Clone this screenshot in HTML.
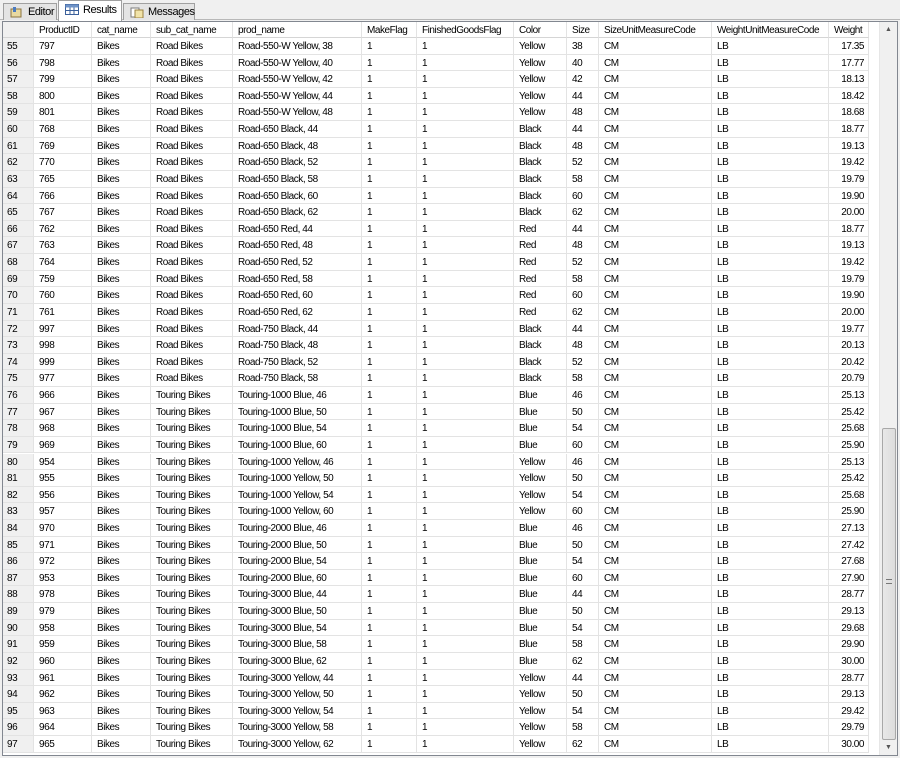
<!DOCTYPE html>
<html><head><meta charset="utf-8"><style>
*{margin:0;padding:0;box-sizing:border-box}
body{width:900px;height:758px;background:#f0f0f0;font-family:"Liberation Sans",sans-serif;font-size:10px;letter-spacing:-0.45px;color:#000;position:relative;overflow:hidden}
.tabs{position:absolute;left:0;top:0;width:900px;height:20px;background:#f0f0f0;border-bottom:1px solid #b8b8b8}
.tab{position:absolute;top:3px;height:17px;border:1px solid #a0a0a0;border-bottom:none;background:#e4e4e4;font-size:11px;padding:2px 0 0 24px;white-space:nowrap}
.tab.act{top:0;height:21px;background:#fff;padding-top:3px}
.ic{position:absolute;left:6px;top:3px;width:14px;height:11px}
.grid{position:absolute;left:2px;top:21px;width:896px;height:735px;background:#fff;border:1px solid #828790}
.row{position:absolute;left:0;height:16.62px;width:866px;display:flex}
.c{border-right:1px solid #e3e3e3;border-bottom:1px solid #e3e3e3;padding:3px 0 0 5px;white-space:nowrap;overflow:hidden;line-height:12px}
.n{background:#f0f0f0;width:31px;padding-left:4px}
.hd .c{background:#fff;border-bottom:1px solid #d5d5d5}
.hd .n{background:#f0f0f0}
.w1{width:58px}.w2{width:59px}.w3{width:82px}.w4{width:129px}.w5{width:55px}.w6{width:97px}.w7{width:53px}.w8{width:32px}.w9{width:113px}.w10{width:117px}.w11{width:40px;text-align:right;padding-right:4px}
.hd .w11{text-align:left;padding-left:5px}
.sb{position:absolute;right:0;top:0;width:18px;height:733px;background:#f0f0f0;border-left:1px solid #e6e6e6}
.thumb{position:absolute;left:2px;top:406px;width:14px;height:312px;background:linear-gradient(90deg,#e8e8e8,#dcdcdc);border:1px solid #a8a8a8;border-radius:2px}
.ar{position:absolute;left:5px;font-size:7px;color:#555}
</style></head><body>
<div class="tabs">
<div class="tab" style="left:3px;width:54px"><svg class="ic" viewBox="0 0 14 11"><rect x="1" y="2" width="10" height="8" fill="#e8d9a0" stroke="#8a7440"/><rect x="3" y="0" width="3" height="5" fill="#4a7ac0"/></svg>Editor</div>
<div class="tab act" style="left:58px;width:64px"><svg class="ic" viewBox="0 0 14 11"><rect x="0.5" y="0.5" width="13" height="10" fill="#fff" stroke="#3a5f9a"/><rect x="0.5" y="0.5" width="13" height="3" fill="#6e93c8"/><path d="M0.5 6.5H13.5M5 3.5V10.5M9 3.5V10.5" stroke="#3a5f9a"/></svg>Results</div>
<div class="tab" style="left:123px;width:72px"><svg class="ic" viewBox="0 0 14 11"><rect x="1" y="1" width="8" height="9" fill="#fff" stroke="#7a7a7a"/><rect x="5" y="3" width="8" height="8" fill="#f1e3a8" stroke="#9a8240"/></svg>Messages</div>
</div>
<div class="grid">
<div class="row hd" style="top:0;height:16px"><div class="c n"></div><div class="c w1">ProductID</div><div class="c w2">cat_name</div><div class="c w3">sub_cat_name</div><div class="c w4">prod_name</div><div class="c w5">MakeFlag</div><div class="c w6">FinishedGoodsFlag</div><div class="c w7">Color</div><div class="c w8">Size</div><div class="c w9">SizeUnitMeasureCode</div><div class="c w10">WeightUnitMeasureCode</div><div class="c w11">Weight</div></div>
<div class="row" style="top:16px"><div class="c n">55</div><div class="c w1">797</div><div class="c w2">Bikes</div><div class="c w3">Road Bikes</div><div class="c w4">Road-550-W Yellow, 38</div><div class="c w5">1</div><div class="c w6">1</div><div class="c w7">Yellow</div><div class="c w8">38</div><div class="c w9">CM</div><div class="c w10">LB</div><div class="c w11">17.35</div></div>
<div class="row" style="top:32.62px"><div class="c n">56</div><div class="c w1">798</div><div class="c w2">Bikes</div><div class="c w3">Road Bikes</div><div class="c w4">Road-550-W Yellow, 40</div><div class="c w5">1</div><div class="c w6">1</div><div class="c w7">Yellow</div><div class="c w8">40</div><div class="c w9">CM</div><div class="c w10">LB</div><div class="c w11">17.77</div></div>
<div class="row" style="top:49.24px"><div class="c n">57</div><div class="c w1">799</div><div class="c w2">Bikes</div><div class="c w3">Road Bikes</div><div class="c w4">Road-550-W Yellow, 42</div><div class="c w5">1</div><div class="c w6">1</div><div class="c w7">Yellow</div><div class="c w8">42</div><div class="c w9">CM</div><div class="c w10">LB</div><div class="c w11">18.13</div></div>
<div class="row" style="top:65.86px"><div class="c n">58</div><div class="c w1">800</div><div class="c w2">Bikes</div><div class="c w3">Road Bikes</div><div class="c w4">Road-550-W Yellow, 44</div><div class="c w5">1</div><div class="c w6">1</div><div class="c w7">Yellow</div><div class="c w8">44</div><div class="c w9">CM</div><div class="c w10">LB</div><div class="c w11">18.42</div></div>
<div class="row" style="top:82.48px"><div class="c n">59</div><div class="c w1">801</div><div class="c w2">Bikes</div><div class="c w3">Road Bikes</div><div class="c w4">Road-550-W Yellow, 48</div><div class="c w5">1</div><div class="c w6">1</div><div class="c w7">Yellow</div><div class="c w8">48</div><div class="c w9">CM</div><div class="c w10">LB</div><div class="c w11">18.68</div></div>
<div class="row" style="top:99.1px"><div class="c n">60</div><div class="c w1">768</div><div class="c w2">Bikes</div><div class="c w3">Road Bikes</div><div class="c w4">Road-650 Black, 44</div><div class="c w5">1</div><div class="c w6">1</div><div class="c w7">Black</div><div class="c w8">44</div><div class="c w9">CM</div><div class="c w10">LB</div><div class="c w11">18.77</div></div>
<div class="row" style="top:115.72px"><div class="c n">61</div><div class="c w1">769</div><div class="c w2">Bikes</div><div class="c w3">Road Bikes</div><div class="c w4">Road-650 Black, 48</div><div class="c w5">1</div><div class="c w6">1</div><div class="c w7">Black</div><div class="c w8">48</div><div class="c w9">CM</div><div class="c w10">LB</div><div class="c w11">19.13</div></div>
<div class="row" style="top:132.34px"><div class="c n">62</div><div class="c w1">770</div><div class="c w2">Bikes</div><div class="c w3">Road Bikes</div><div class="c w4">Road-650 Black, 52</div><div class="c w5">1</div><div class="c w6">1</div><div class="c w7">Black</div><div class="c w8">52</div><div class="c w9">CM</div><div class="c w10">LB</div><div class="c w11">19.42</div></div>
<div class="row" style="top:148.96px"><div class="c n">63</div><div class="c w1">765</div><div class="c w2">Bikes</div><div class="c w3">Road Bikes</div><div class="c w4">Road-650 Black, 58</div><div class="c w5">1</div><div class="c w6">1</div><div class="c w7">Black</div><div class="c w8">58</div><div class="c w9">CM</div><div class="c w10">LB</div><div class="c w11">19.79</div></div>
<div class="row" style="top:165.58px"><div class="c n">64</div><div class="c w1">766</div><div class="c w2">Bikes</div><div class="c w3">Road Bikes</div><div class="c w4">Road-650 Black, 60</div><div class="c w5">1</div><div class="c w6">1</div><div class="c w7">Black</div><div class="c w8">60</div><div class="c w9">CM</div><div class="c w10">LB</div><div class="c w11">19.90</div></div>
<div class="row" style="top:182.2px"><div class="c n">65</div><div class="c w1">767</div><div class="c w2">Bikes</div><div class="c w3">Road Bikes</div><div class="c w4">Road-650 Black, 62</div><div class="c w5">1</div><div class="c w6">1</div><div class="c w7">Black</div><div class="c w8">62</div><div class="c w9">CM</div><div class="c w10">LB</div><div class="c w11">20.00</div></div>
<div class="row" style="top:198.82px"><div class="c n">66</div><div class="c w1">762</div><div class="c w2">Bikes</div><div class="c w3">Road Bikes</div><div class="c w4">Road-650 Red, 44</div><div class="c w5">1</div><div class="c w6">1</div><div class="c w7">Red</div><div class="c w8">44</div><div class="c w9">CM</div><div class="c w10">LB</div><div class="c w11">18.77</div></div>
<div class="row" style="top:215.44px"><div class="c n">67</div><div class="c w1">763</div><div class="c w2">Bikes</div><div class="c w3">Road Bikes</div><div class="c w4">Road-650 Red, 48</div><div class="c w5">1</div><div class="c w6">1</div><div class="c w7">Red</div><div class="c w8">48</div><div class="c w9">CM</div><div class="c w10">LB</div><div class="c w11">19.13</div></div>
<div class="row" style="top:232.06px"><div class="c n">68</div><div class="c w1">764</div><div class="c w2">Bikes</div><div class="c w3">Road Bikes</div><div class="c w4">Road-650 Red, 52</div><div class="c w5">1</div><div class="c w6">1</div><div class="c w7">Red</div><div class="c w8">52</div><div class="c w9">CM</div><div class="c w10">LB</div><div class="c w11">19.42</div></div>
<div class="row" style="top:248.68px"><div class="c n">69</div><div class="c w1">759</div><div class="c w2">Bikes</div><div class="c w3">Road Bikes</div><div class="c w4">Road-650 Red, 58</div><div class="c w5">1</div><div class="c w6">1</div><div class="c w7">Red</div><div class="c w8">58</div><div class="c w9">CM</div><div class="c w10">LB</div><div class="c w11">19.79</div></div>
<div class="row" style="top:265.3px"><div class="c n">70</div><div class="c w1">760</div><div class="c w2">Bikes</div><div class="c w3">Road Bikes</div><div class="c w4">Road-650 Red, 60</div><div class="c w5">1</div><div class="c w6">1</div><div class="c w7">Red</div><div class="c w8">60</div><div class="c w9">CM</div><div class="c w10">LB</div><div class="c w11">19.90</div></div>
<div class="row" style="top:281.92px"><div class="c n">71</div><div class="c w1">761</div><div class="c w2">Bikes</div><div class="c w3">Road Bikes</div><div class="c w4">Road-650 Red, 62</div><div class="c w5">1</div><div class="c w6">1</div><div class="c w7">Red</div><div class="c w8">62</div><div class="c w9">CM</div><div class="c w10">LB</div><div class="c w11">20.00</div></div>
<div class="row" style="top:298.54px"><div class="c n">72</div><div class="c w1">997</div><div class="c w2">Bikes</div><div class="c w3">Road Bikes</div><div class="c w4">Road-750 Black, 44</div><div class="c w5">1</div><div class="c w6">1</div><div class="c w7">Black</div><div class="c w8">44</div><div class="c w9">CM</div><div class="c w10">LB</div><div class="c w11">19.77</div></div>
<div class="row" style="top:315.16px"><div class="c n">73</div><div class="c w1">998</div><div class="c w2">Bikes</div><div class="c w3">Road Bikes</div><div class="c w4">Road-750 Black, 48</div><div class="c w5">1</div><div class="c w6">1</div><div class="c w7">Black</div><div class="c w8">48</div><div class="c w9">CM</div><div class="c w10">LB</div><div class="c w11">20.13</div></div>
<div class="row" style="top:331.78px"><div class="c n">74</div><div class="c w1">999</div><div class="c w2">Bikes</div><div class="c w3">Road Bikes</div><div class="c w4">Road-750 Black, 52</div><div class="c w5">1</div><div class="c w6">1</div><div class="c w7">Black</div><div class="c w8">52</div><div class="c w9">CM</div><div class="c w10">LB</div><div class="c w11">20.42</div></div>
<div class="row" style="top:348.4px"><div class="c n">75</div><div class="c w1">977</div><div class="c w2">Bikes</div><div class="c w3">Road Bikes</div><div class="c w4">Road-750 Black, 58</div><div class="c w5">1</div><div class="c w6">1</div><div class="c w7">Black</div><div class="c w8">58</div><div class="c w9">CM</div><div class="c w10">LB</div><div class="c w11">20.79</div></div>
<div class="row" style="top:365.02px"><div class="c n">76</div><div class="c w1">966</div><div class="c w2">Bikes</div><div class="c w3">Touring Bikes</div><div class="c w4">Touring-1000 Blue, 46</div><div class="c w5">1</div><div class="c w6">1</div><div class="c w7">Blue</div><div class="c w8">46</div><div class="c w9">CM</div><div class="c w10">LB</div><div class="c w11">25.13</div></div>
<div class="row" style="top:381.64px"><div class="c n">77</div><div class="c w1">967</div><div class="c w2">Bikes</div><div class="c w3">Touring Bikes</div><div class="c w4">Touring-1000 Blue, 50</div><div class="c w5">1</div><div class="c w6">1</div><div class="c w7">Blue</div><div class="c w8">50</div><div class="c w9">CM</div><div class="c w10">LB</div><div class="c w11">25.42</div></div>
<div class="row" style="top:398.26px"><div class="c n">78</div><div class="c w1">968</div><div class="c w2">Bikes</div><div class="c w3">Touring Bikes</div><div class="c w4">Touring-1000 Blue, 54</div><div class="c w5">1</div><div class="c w6">1</div><div class="c w7">Blue</div><div class="c w8">54</div><div class="c w9">CM</div><div class="c w10">LB</div><div class="c w11">25.68</div></div>
<div class="row" style="top:414.88px"><div class="c n">79</div><div class="c w1">969</div><div class="c w2">Bikes</div><div class="c w3">Touring Bikes</div><div class="c w4">Touring-1000 Blue, 60</div><div class="c w5">1</div><div class="c w6">1</div><div class="c w7">Blue</div><div class="c w8">60</div><div class="c w9">CM</div><div class="c w10">LB</div><div class="c w11">25.90</div></div>
<div class="row" style="top:431.5px"><div class="c n">80</div><div class="c w1">954</div><div class="c w2">Bikes</div><div class="c w3">Touring Bikes</div><div class="c w4">Touring-1000 Yellow, 46</div><div class="c w5">1</div><div class="c w6">1</div><div class="c w7">Yellow</div><div class="c w8">46</div><div class="c w9">CM</div><div class="c w10">LB</div><div class="c w11">25.13</div></div>
<div class="row" style="top:448.12px"><div class="c n">81</div><div class="c w1">955</div><div class="c w2">Bikes</div><div class="c w3">Touring Bikes</div><div class="c w4">Touring-1000 Yellow, 50</div><div class="c w5">1</div><div class="c w6">1</div><div class="c w7">Yellow</div><div class="c w8">50</div><div class="c w9">CM</div><div class="c w10">LB</div><div class="c w11">25.42</div></div>
<div class="row" style="top:464.74px"><div class="c n">82</div><div class="c w1">956</div><div class="c w2">Bikes</div><div class="c w3">Touring Bikes</div><div class="c w4">Touring-1000 Yellow, 54</div><div class="c w5">1</div><div class="c w6">1</div><div class="c w7">Yellow</div><div class="c w8">54</div><div class="c w9">CM</div><div class="c w10">LB</div><div class="c w11">25.68</div></div>
<div class="row" style="top:481.36px"><div class="c n">83</div><div class="c w1">957</div><div class="c w2">Bikes</div><div class="c w3">Touring Bikes</div><div class="c w4">Touring-1000 Yellow, 60</div><div class="c w5">1</div><div class="c w6">1</div><div class="c w7">Yellow</div><div class="c w8">60</div><div class="c w9">CM</div><div class="c w10">LB</div><div class="c w11">25.90</div></div>
<div class="row" style="top:497.98px"><div class="c n">84</div><div class="c w1">970</div><div class="c w2">Bikes</div><div class="c w3">Touring Bikes</div><div class="c w4">Touring-2000 Blue, 46</div><div class="c w5">1</div><div class="c w6">1</div><div class="c w7">Blue</div><div class="c w8">46</div><div class="c w9">CM</div><div class="c w10">LB</div><div class="c w11">27.13</div></div>
<div class="row" style="top:514.6px"><div class="c n">85</div><div class="c w1">971</div><div class="c w2">Bikes</div><div class="c w3">Touring Bikes</div><div class="c w4">Touring-2000 Blue, 50</div><div class="c w5">1</div><div class="c w6">1</div><div class="c w7">Blue</div><div class="c w8">50</div><div class="c w9">CM</div><div class="c w10">LB</div><div class="c w11">27.42</div></div>
<div class="row" style="top:531.22px"><div class="c n">86</div><div class="c w1">972</div><div class="c w2">Bikes</div><div class="c w3">Touring Bikes</div><div class="c w4">Touring-2000 Blue, 54</div><div class="c w5">1</div><div class="c w6">1</div><div class="c w7">Blue</div><div class="c w8">54</div><div class="c w9">CM</div><div class="c w10">LB</div><div class="c w11">27.68</div></div>
<div class="row" style="top:547.84px"><div class="c n">87</div><div class="c w1">953</div><div class="c w2">Bikes</div><div class="c w3">Touring Bikes</div><div class="c w4">Touring-2000 Blue, 60</div><div class="c w5">1</div><div class="c w6">1</div><div class="c w7">Blue</div><div class="c w8">60</div><div class="c w9">CM</div><div class="c w10">LB</div><div class="c w11">27.90</div></div>
<div class="row" style="top:564.46px"><div class="c n">88</div><div class="c w1">978</div><div class="c w2">Bikes</div><div class="c w3">Touring Bikes</div><div class="c w4">Touring-3000 Blue, 44</div><div class="c w5">1</div><div class="c w6">1</div><div class="c w7">Blue</div><div class="c w8">44</div><div class="c w9">CM</div><div class="c w10">LB</div><div class="c w11">28.77</div></div>
<div class="row" style="top:581.08px"><div class="c n">89</div><div class="c w1">979</div><div class="c w2">Bikes</div><div class="c w3">Touring Bikes</div><div class="c w4">Touring-3000 Blue, 50</div><div class="c w5">1</div><div class="c w6">1</div><div class="c w7">Blue</div><div class="c w8">50</div><div class="c w9">CM</div><div class="c w10">LB</div><div class="c w11">29.13</div></div>
<div class="row" style="top:597.7px"><div class="c n">90</div><div class="c w1">958</div><div class="c w2">Bikes</div><div class="c w3">Touring Bikes</div><div class="c w4">Touring-3000 Blue, 54</div><div class="c w5">1</div><div class="c w6">1</div><div class="c w7">Blue</div><div class="c w8">54</div><div class="c w9">CM</div><div class="c w10">LB</div><div class="c w11">29.68</div></div>
<div class="row" style="top:614.32px"><div class="c n">91</div><div class="c w1">959</div><div class="c w2">Bikes</div><div class="c w3">Touring Bikes</div><div class="c w4">Touring-3000 Blue, 58</div><div class="c w5">1</div><div class="c w6">1</div><div class="c w7">Blue</div><div class="c w8">58</div><div class="c w9">CM</div><div class="c w10">LB</div><div class="c w11">29.90</div></div>
<div class="row" style="top:630.94px"><div class="c n">92</div><div class="c w1">960</div><div class="c w2">Bikes</div><div class="c w3">Touring Bikes</div><div class="c w4">Touring-3000 Blue, 62</div><div class="c w5">1</div><div class="c w6">1</div><div class="c w7">Blue</div><div class="c w8">62</div><div class="c w9">CM</div><div class="c w10">LB</div><div class="c w11">30.00</div></div>
<div class="row" style="top:647.56px"><div class="c n">93</div><div class="c w1">961</div><div class="c w2">Bikes</div><div class="c w3">Touring Bikes</div><div class="c w4">Touring-3000 Yellow, 44</div><div class="c w5">1</div><div class="c w6">1</div><div class="c w7">Yellow</div><div class="c w8">44</div><div class="c w9">CM</div><div class="c w10">LB</div><div class="c w11">28.77</div></div>
<div class="row" style="top:664.18px"><div class="c n">94</div><div class="c w1">962</div><div class="c w2">Bikes</div><div class="c w3">Touring Bikes</div><div class="c w4">Touring-3000 Yellow, 50</div><div class="c w5">1</div><div class="c w6">1</div><div class="c w7">Yellow</div><div class="c w8">50</div><div class="c w9">CM</div><div class="c w10">LB</div><div class="c w11">29.13</div></div>
<div class="row" style="top:680.8px"><div class="c n">95</div><div class="c w1">963</div><div class="c w2">Bikes</div><div class="c w3">Touring Bikes</div><div class="c w4">Touring-3000 Yellow, 54</div><div class="c w5">1</div><div class="c w6">1</div><div class="c w7">Yellow</div><div class="c w8">54</div><div class="c w9">CM</div><div class="c w10">LB</div><div class="c w11">29.42</div></div>
<div class="row" style="top:697.42px"><div class="c n">96</div><div class="c w1">964</div><div class="c w2">Bikes</div><div class="c w3">Touring Bikes</div><div class="c w4">Touring-3000 Yellow, 58</div><div class="c w5">1</div><div class="c w6">1</div><div class="c w7">Yellow</div><div class="c w8">58</div><div class="c w9">CM</div><div class="c w10">LB</div><div class="c w11">29.79</div></div>
<div class="row" style="top:714.04px"><div class="c n">97</div><div class="c w1">965</div><div class="c w2">Bikes</div><div class="c w3">Touring Bikes</div><div class="c w4">Touring-3000 Yellow, 62</div><div class="c w5">1</div><div class="c w6">1</div><div class="c w7">Yellow</div><div class="c w8">62</div><div class="c w9">CM</div><div class="c w10">LB</div><div class="c w11">30.00</div></div>
<div class="sb"><div class="ar" style="top:4px">▲</div><div class="thumb"><div style="position:absolute;left:3px;top:150px;width:6px;height:5px;border-top:1px solid #777;border-bottom:1px solid #777"></div></div><div class="ar" style="bottom:4px">▼</div></div>
</div>
</body></html>
